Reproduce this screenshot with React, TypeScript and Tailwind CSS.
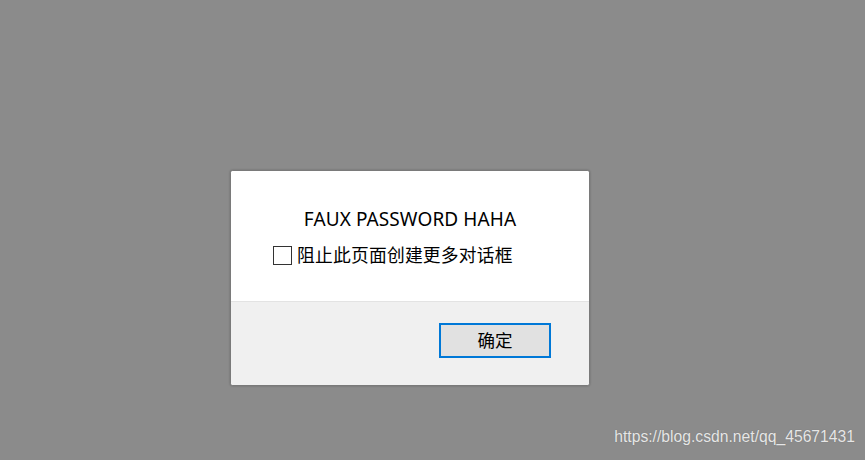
import React, { useState } from 'react';

const font = { fontFamily: '"Noto Sans", "Noto Sans CJK SC", sans-serif' };

const App = () => {
    const [checked, setChecked] = useState(false);

    return (
        <div className="relative w-[865px] h-[460px] bg-[#8b8b8b] overflow-hidden" style={font}>
            {/* Dialog */}
            <div className="ml-[230px] pt-[170px]">
                <div className="w-[360px] h-[216px] border border-[#7a7a7a] rounded-[3px] bg-white overflow-hidden flex flex-col shadow-[0_0_2px_rgba(0,0,0,0.3)]">
                    <div className="h-[131px] bg-white flex flex-col items-center pt-[36px] border-b border-[#e3e3e3]">
                        <p className="text-[19px] leading-[24px] text-black tracking-[0.1px]">FAUX PASSWORD HAHA</p>
                        <label className="self-start ml-[42px] mt-[12px] flex items-center gap-[5px] cursor-pointer">
                            <span
                                onClick={() => setChecked(!checked)}
                                className="w-[19px] h-[19px] border border-[#333333] bg-white flex items-center justify-center"
                            >
                                {checked && (
                                    <svg width="13" height="13" viewBox="0 0 13 13">
                                        <path d="M2 7 L5 10 L11 3" fill="none" stroke="#333" strokeWidth="1.5" />
                                    </svg>
                                )}
                            </span>
                            <span className="text-[17.8px] leading-[24px] text-black tracking-[0.2px]">阻止此页面创建更多对话框</span>
                        </label>
                    </div>
                    <div className="flex-1 bg-[#f0f0f0] flex justify-end items-start pt-[21px] pr-[38px]">
                        <button className="w-[112px] h-[35px] border-2 border-[#0078d7] bg-[#e1e1e1] text-[17.5px] leading-none text-black flex items-center justify-center">
                            确定
                        </button>
                    </div>
                </div>
            </div>

            {/* Watermark */}
            <div
                className="absolute right-[10px] bottom-[11px] text-[15.7px] text-[#e6e6e6] [text-shadow:0_0_1px_rgba(0,0,0,0.25)]"
                style={{ fontFamily: '"Liberation Sans", Arial, sans-serif' }}
            >
                https://blog.csdn.net/qq_45671431
            </div>
        </div>
    );
};

export default App;
